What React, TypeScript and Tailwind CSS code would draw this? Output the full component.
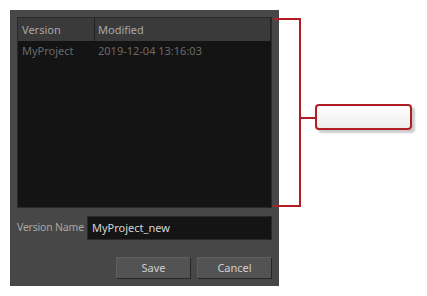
export default function App() {
  return (
    <div
      className="relative w-[427px] h-[296px] bg-white"
      style={{ fontFamily: '"Noto Sans", "Open Sans", sans-serif' }}
    >
      <div className="absolute left-[10px] top-[10px] w-[269px] h-[276px] bg-[#474747] p-[7px] flex flex-col">
        {/* Table */}
        <div className="h-[191px] bg-[#141414] border border-[#2a2a2a] flex flex-col">
          <div className="flex h-[23px] bg-[#3a3a3a] text-[11px] text-[#a8a8a8] leading-[23px]">
            <div className="w-[77px] pl-[4px] border-r border-[#222]">Version</div>
            <div className="flex-1 pl-[3px] border-r border-[#222]">Modified</div>
          </div>
          <div className="flex text-[11px] text-[#6a6a6a] leading-[20px]">
            <div className="w-[77px] pl-[4px]">MyProject</div>
            <div className="flex-1 pl-[3px]">2019-12-04 13:16:03</div>
          </div>
        </div>
        {/* Version name */}
        <div className="flex items-center mt-[8px] h-[24px]">
          <div className="w-[70px] whitespace-nowrap text-[10.5px] tracking-[-0.2px] text-[#a8a8a8]">Version Name</div>
          <div className="flex-1 h-[24px] bg-[#141414] border border-[#2a2a2a] text-[11px] text-[#d4d4d4] leading-[22px] pl-[4px]">
            MyProject_new
          </div>
        </div>
        {/* Buttons */}
        <div className="flex justify-end gap-[6px] mt-[17px]">
          <button className="w-[75px] h-[22px] bg-[#535353] border border-[#5e5e5e] border-r-[#262626] border-b-[#262626] text-[11px] text-[#d0d0d0]">
            Save
          </button>
          <button className="w-[75px] h-[22px] bg-[#535353] border border-[#5e5e5e] border-r-[#262626] border-b-[#262626] text-[11px] text-[#d0d0d0]">
            Cancel
          </button>
        </div>
      </div>
      {/* Annotation bracket */}
      <div className="absolute left-[273px] top-[18px] w-[28px] h-[189px] border-t-[2px] border-r-[2px] border-b-[2px] border-[#b01e24]" />
      <div className="absolute left-[300px] top-[117px] w-[16px] h-[2px] bg-[#b01e24]" />
      <div className="absolute left-[315px] top-[104px] w-[97px] h-[26px] rounded-[4px] border-[2px] border-[#b01e24] bg-gradient-to-b from-white to-[#ededed] shadow-[3px_3px_2px_rgba(0,0,0,0.2)]" />
    </div>
  )
}
